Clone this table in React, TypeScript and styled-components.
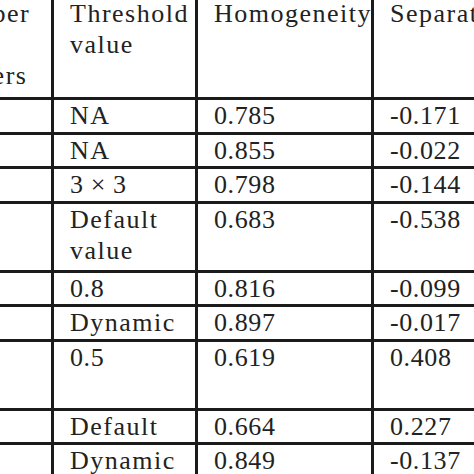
import styled, { createGlobalStyle } from "styled-components";

const ink = "#1b1b1b";
const textInk = "#222";

const GlobalStyle = createGlobalStyle`
  body {
    margin: 0;
    background: #ffffff;
  }
`;

const Frame = styled.div`
  width: 474px;
  height: 474px;
  overflow: hidden;
  background: #ffffff;
`;

interface GridProps {
  $rows: string;
}

// the grid background shows through the gaps as the ruled lines
const Grid = styled.div<GridProps>`
  display: grid;
  grid-template-columns: 131px 141px 173px 200px;
  grid-template-rows: ${(p) => p.$rows};
  gap: 3px;
  width: max-content;
  margin: -10px 0 0 -80px;
  background: ${ink};
`;

interface CellProps {
  $word?: boolean;
  $head?: boolean;
}

const Cell = styled.div<CellProps>`
  background: #ffffff;
  padding: ${(p) => (p.$head ? "7.7px 4px 0 16px" : "0 4px 0 16px")};
  font-family: "Liberation Serif", "Times New Roman", serif;
  font-size: 26px;
  line-height: 31px;
  color: ${textInk};
  letter-spacing: ${(p) => (p.$word ? "1.5px" : "0.6px")};
  overflow: visible;
`;

interface Row {
  threshold: string;
  homogeneity: string;
  separation: string;
  tall?: boolean;
}

const rows: Row[] = [
  { threshold: "NA", homogeneity: "0.785", separation: "-0.171" },
  { threshold: "NA", homogeneity: "0.855", separation: "-0.022" },
  { threshold: "3 × 3", homogeneity: "0.798", separation: "-0.144" },
  { threshold: "Default value", homogeneity: "0.683", separation: "-0.538", tall: true },
  { threshold: "0.8", homogeneity: "0.816", separation: "-0.099" },
  { threshold: "Dynamic", homogeneity: "0.897", separation: "-0.017" },
  { threshold: "0.5", homogeneity: "0.619", separation: "0.408", tall: true },
  { threshold: "Default", homogeneity: "0.664", separation: "0.227" },
  { threshold: "Dynamic", homogeneity: "0.849", separation: "-0.137" },
];

const isWord = (s: string) => /[A-Za-z]/.test(s);

export default function App() {
  const template = ["107px", ...rows.map((r) => (r.tall ? "66px" : "31.5px"))].join(" ");

  return (
    <Frame>
      <GlobalStyle />
      <Grid $rows={template}>
        <Cell $head $word>Number of clusters</Cell>
        <Cell $head $word>Threshold value</Cell>
        <Cell $head $word>Homogeneity</Cell>
        <Cell $head $word>Separation</Cell>
        {rows.map((r, i) => (
          <>
            <Cell key={`n${i}`} />
            <Cell key={`t${i}`} $word={isWord(r.threshold)}>
              {r.threshold}
            </Cell>
            <Cell key={`h${i}`}>{r.homogeneity}</Cell>
            <Cell key={`s${i}`}>{r.separation}</Cell>
          </>
        ))}
      </Grid>
    </Frame>
  );
}
